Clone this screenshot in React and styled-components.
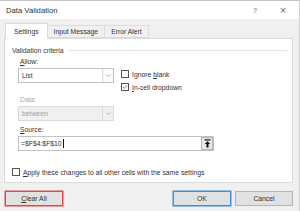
import styled, { createGlobalStyle } from "styled-components";

const GlobalStyle = createGlobalStyle`
  * { box-sizing: border-box; }
  body {
    margin: 0;
    background: #f0f0f0;
    font-family: "Liberation Sans", Arial, sans-serif;
    font-size: 6.8px;
    color: #333;
  }
`;

const Chevron = () => (
  <svg width="5" height="3" viewBox="0 0 5 3">
    <path d="M0.5 0.6 L2.5 2.4 L4.5 0.6" fill="none" stroke="#9a9a9a" strokeWidth="0.7" />
  </svg>
);

const Check = () => (
  <svg width="8" height="8" viewBox="0 0 8 8">
    <path d="M1.4 4 L3.2 5.8 L6.7 1.8" fill="none" stroke="#333" strokeWidth="0.8" />
  </svg>
);

const UploadIcon = () => (
  <svg width="7" height="9" viewBox="0 0 7 9">
    <rect x="0.5" y="0.3" width="6" height="1.2" fill="#111" />
    <path d="M3.5 2.2 L6.3 5 L4.5 5 L4.5 8.6 L2.5 8.6 L2.5 5 L0.7 5 Z" fill="#111" />
  </svg>
);

const App = () => {
  return (
    <>
      <GlobalStyle />
      <Dialog>
        <TitleBar>
          <Title>Data Validation</Title>
          <TitleButton>?</TitleButton>
          <TitleButton $close>×</TitleButton>
        </TitleBar>
        <Body>
          <Tabs>
            <Tab $active>Settings</Tab>
            <Tab>Input Message</Tab>
            <Tab>Error Alert</Tab>
          </Tabs>
          <Panel>
            <Legend>
              <span>Validation criteria</span>
              <Rule />
            </Legend>
            <Criteria>
              <Field>
                <Label>
                  <u>A</u>llow:
                </Label>
                <Select>
                  <span>List</span>
                  <Arrow>
                    <Chevron />
                  </Arrow>
                </Select>
              </Field>
              <Options>
                <CheckRow>
                  <Box />
                  <span>
                    Ignore <u>b</u>lank
                  </span>
                </CheckRow>
                <CheckRow>
                  <Box>
                    <Check />
                  </Box>
                  <span>
                    <u>I</u>n-cell dropdown
                  </span>
                </CheckRow>
              </Options>
            </Criteria>
            <Field $top={4}>
              <Label $disabled>Data:</Label>
              <Select $disabled>
                <span>between</span>
                <Arrow $disabled>
                  <Chevron />
                </Arrow>
              </Select>
            </Field>
            <Field $top={4}>
              <Label>
                <u>S</u>ource:
              </Label>
              <SourceInput>
                <span>=$F$4:$F$10</span>
                <Caret />
                <Spacer />
                <RefButton>
                  <UploadIcon />
                </RefButton>
              </SourceInput>
            </Field>
            <ApplyRow>
              <Box />
              <span>
                <u>A</u>pply these changes to all other cells with the same settings
              </span>
            </ApplyRow>
          </Panel>
          <Footer>
            <Button $outline="#e3474a">
              <u>C</u>lear All
            </Button>
            <Spacer />
            <Button $outline="#3c8fd8">OK</Button>
            <Button>Cancel</Button>
          </Footer>
        </Body>
      </Dialog>
    </>
  );
};

const Dialog = styled.div`
  width: 300px;
  height: 211px;
  display: flex;
  flex-direction: column;
  border-top: 1px solid #c4c4c4;
  border-right: 1px solid #cfcfcf;
  overflow: hidden;
`;

const TitleBar = styled.div`
  display: flex;
  align-items: center;
  height: 18px;
  background: #fff;
  padding-left: 6px;
`;

const Title = styled.div`
  flex: 1;
  font-size: 7.7px;
  color: #333;
`;

const TitleButton = styled.div`
  width: 28px;
  text-align: center;
  font-size: ${(p) => (p.$close ? "11px" : "7px")};
  color: #666;
  line-height: 1;
  margin-right: ${(p) => (p.$close ? "2px" : "0")};
`;

const Body = styled.div`
  flex: 1;
  display: flex;
  flex-direction: column;
  padding: 4px 6px 0 4px;
`;

const Tabs = styled.div`
  display: flex;
  align-items: flex-end;
  height: 15px;
  padding-left: 1px;
`;

const Tab = styled.div`
  display: flex;
  align-items: center;
  height: ${(p) => (p.$active ? "16px" : "13px")};
  padding: 0 ${(p) => (p.$active ? "8px" : "6px")};
  margin-bottom: ${(p) => (p.$active ? "-1px" : "0")};
  background: ${(p) => (p.$active ? "#fff" : "#f0f0f0")};
  border: 1px solid #dcdcdc;
  border-bottom: ${(p) => (p.$active ? "none" : "1px solid #dcdcdc")};
  border-left: ${(p) => (p.$active ? "1px solid #dcdcdc" : "none")};
  color: #333;
  position: relative;
  z-index: ${(p) => (p.$active ? 1 : 0)};
`;

const Panel = styled.div`
  height: 145px;
  background: #fff;
  border: 1px solid #dcdcdc;
  display: flex;
  flex-direction: column;
  padding: 6px 5px 0 7px;
`;

const Legend = styled.div`
  display: flex;
  align-items: center;
  gap: 4px;
  height: 10px;
`;

const Rule = styled.div`
  flex: 1;
  height: 1px;
  background: #e3e3e3;
`;

const Criteria = styled.div`
  display: flex;
  gap: 7px;
  padding-left: 6px;
  margin-top: 2px;
`;

const Field = styled.div`
  display: flex;
  flex-direction: column;
  padding-left: ${(p) => (p.$top ? "6px" : "0")};
  margin-top: ${(p) => p.$top || 0}px;
`;

const Label = styled.div`
  height: 10px;
  line-height: 10px;
  padding-left: 2px;
  margin-bottom: 1px;
  color: ${(p) => (p.$disabled ? "#a8a8a8" : "#333")};
`;

const Select = styled.div`
  width: 96px;
  height: 15px;
  display: flex;
  align-items: center;
  padding-left: 3px;
  border: 1px solid ${(p) => (p.$disabled ? "#dadada" : "#c2c2c2")};
  background: ${(p) => (p.$disabled ? "#f0f0f0" : "#fff")};
  color: ${(p) => (p.$disabled ? "#a0a0a0" : "#333")};

  span {
    flex: 1;
  }
`;

const Arrow = styled.div`
  width: 11px;
  height: 100%;
  display: flex;
  align-items: center;
  justify-content: center;
  border-left: 1px solid #dadada;
  background: ${(p) => (p.$disabled ? "#f0f0f0" : "#fafafa")};
`;

const Options = styled.div`
  display: flex;
  flex-direction: column;
  gap: 5px;
  padding-top: 13px;
`;

const CheckRow = styled.div`
  display: flex;
  align-items: center;
  gap: 3px;
  height: 8px;
`;

const Box = styled.div`
  width: 8px;
  height: 8px;
  border: 1px solid #555;
  background: #fff;
  display: flex;
  align-items: center;
  justify-content: center;
  flex-shrink: 0;
`;

const SourceInput = styled.div`
  width: 196px;
  height: 15px;
  display: flex;
  align-items: center;
  padding-left: 2px;
  border: 1px solid #c2c2c2;
`;

const Caret = styled.div`
  width: 1px;
  height: 9px;
  background: #111;
  margin-left: 1px;
`;

const Spacer = styled.div`
  flex: 1;
`;

const RefButton = styled.div`
  width: 12px;
  height: 13px;
  display: flex;
  align-items: center;
  justify-content: center;
  background: #e8e8e8;
  border: 1px solid #b5b5b5;
`;

const ApplyRow = styled(CheckRow)`
  margin-top: auto;
  margin-bottom: 6px;
`;

const Footer = styled.div`
  display: flex;
  align-items: center;
  gap: 4px;
  padding: 8px 0 0 1px;
`;

const Button = styled.div`
  width: 58px;
  height: 15px;
  display: flex;
  align-items: center;
  justify-content: center;
  background: #e1e1e1;
  border: 1px solid ${(p) => p.$outline || "#b5b5b5"};
  box-shadow: ${(p) => (p.$outline ? `0 0 0 0.5px ${p.$outline}` : "none")};
  color: #333;
`;

export default App;
